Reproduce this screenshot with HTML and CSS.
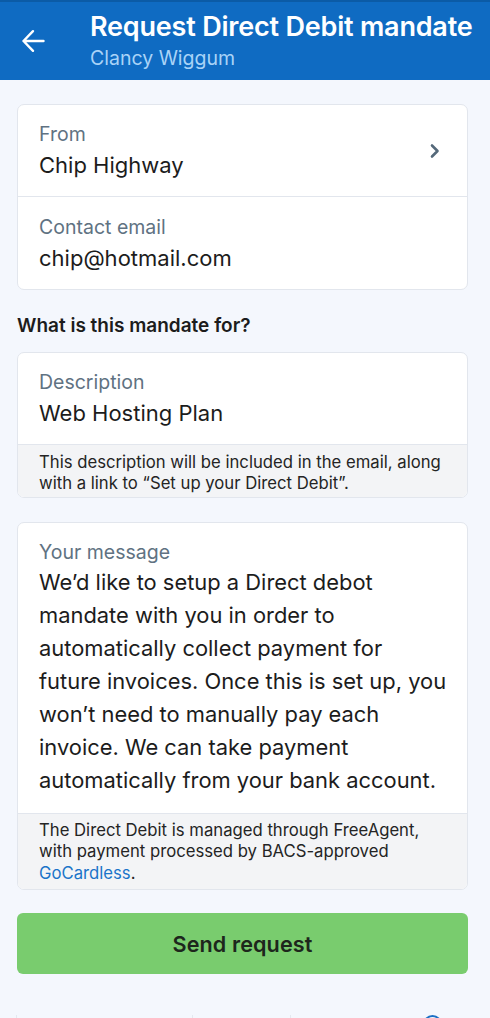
FILE: index.html
```html
<!DOCTYPE html>
<html lang="en">
<head>
<meta charset="utf-8">
<title>Request Direct Debit mandate</title>
<link rel="stylesheet" href="styles.css">
</head>
<body>
<header class="appbar">
  <button class="back" aria-label="Back">
    <svg width="24" height="24" viewBox="0 0 24 24"><path d="M22.5 12H2.5M12 2.2L2.5 12l9.5 9.8" fill="none" stroke="#fff" stroke-width="2.4" stroke-linecap="round" stroke-linejoin="round"/></svg>
  </button>
  <div class="titles">
    <h1 class="title">Request Direct Debit mandate</h1>
    <div class="subtitle">Clancy Wiggum</div>
  </div>
</header>
<main class="content">
  <section class="card">
    <div class="field field-first field-link">
      <div class="field-body">
        <div class="label">From</div>
        <div class="value">Chip Highway</div>
      </div>
      <svg class="chevron" width="12" height="16" viewBox="0 0 12 16"><path d="M3 2.5l5.5 5.5-5.5 5.5" fill="none" stroke="#55697a" stroke-width="2.6" stroke-linecap="round" stroke-linejoin="round"/></svg>
    </div>
    <div class="field field-sep">
      <div class="label">Contact email</div>
      <div class="value">chip@hotmail.com</div>
    </div>
  </section>

  <h2 class="section-title">What is this mandate for?</h2>

  <section class="card">
    <div class="field field-first">
      <div class="label">Description</div>
      <div class="value">Web Hosting Plan</div>
    </div>
    <div class="note note-desc">This description will be included in the email, along with a link to “Set up your Direct Debit”.</div>
  </section>

  <section class="card card-msg">
    <div class="field field-first field-msg">
      <div class="label">Your message</div>
      <div class="message">We’d like to setup a Direct debot<br>mandate with you in order to<br>automatically collect payment for<br>future invoices. Once this is set up, you<br>won’t need to manually pay each<br>invoice. We can take payment<br>automatically from your bank account.</div>
    </div>
    <div class="note note-msg">The Direct Debit is managed through FreeAgent, with payment processed by BACS-approved <a class="link" href="#">GoCardless</a>.</div>
  </section>

  <button class="primary">Send request</button>
</main>
<nav class="tabbar">
  <span class="tab"></span>
  <span class="tab"></span>
  <span class="tab"></span>
  <span class="tab tab-icon"><span class="ring"></span></span>
</nav>
</body>
</html>
```

FILE: styles.css
```css
* { box-sizing: border-box; }
html, body { margin: 0; padding: 0; }
body {
  background: #f4f7fd;
  font-family: Inter, "Noto Sans", sans-serif;
  color: #1f1f1f;
  width: 490px;
  height: 1018px;
  overflow: hidden;
}
.appbar {
  background: #0f6bc2;
  border-top: 2px solid #0b5ba6;
  height: 80px;
  display: flex;
  align-items: flex-start;
  padding: 9px 0 0 21px;
}
.back {
  background: none;
  border: 0;
  padding: 0;
  width: 24px;
  height: 24px;
  margin: 18px 45px 0 0;
}
.back svg { display: block; }
.titles { display: flex; flex-direction: column; }
.title {
  margin: 0;
  color: #fff;
  font-size: 27px;
  font-weight: 600;
  line-height: 32px;
  letter-spacing: -0.2px;
}
.subtitle {
  color: #a9d3f7;
  font-size: 19.5px;
  line-height: 24px;
  margin-top: 3px;
}
.content {
  padding: 24px 22px 0 17px;
  display: flex;
  flex-direction: column;
}
.card {
  background: #fff;
  border: 1px solid #e2e6ed;
  border-radius: 7px;
  overflow: hidden;
}
.field { padding: 18px 16px 16px 21px; }
.field-first { padding-top: 17px; padding-bottom: 16px; }
.field-link {
  display: flex;
  align-items: center;
  justify-content: space-between;
  padding-right: 26px;
}
.field-sep { border-top: 1px solid #e2e6ed; }
.label {
  color: #607282;
  font-size: 19.5px;
  line-height: 24px;
}
.value {
  color: #1c1c1c;
  font-size: 22px;
  line-height: 30px;
  margin-top: 4px;
}
.chevron { display: block; margin-top: 0; }
.section-title {
  margin: 24px 0 14px;
  font-size: 19px;
  line-height: 24px;
  font-weight: 600;
  color: #1c1c1c;
}
.note {
  background: #f3f4f6;
  border-top: 1px solid #e2e6ed;
  font-size: 16.7px;
  line-height: 21.5px;
  color: #242424;
  padding: 6px 16px 3px 21px;
}
.note-desc { padding-top: 6.5px; padding-bottom: 2.5px; }
.note-msg { padding-top: 5.5px; padding-bottom: 4.5px; }
.card-msg { margin-top: 24px; }
.field-msg { padding-right: 6px; padding-bottom: 16px; }
.message {
  font-size: 21.9px;
  line-height: 33px;
  color: #1c1c1c;
  margin-top: 2px;
}
.link { color: #1b74c9; text-decoration: none; }
.primary {
  margin-top: 23px;
  height: 61px;
  border: 0;
  border-radius: 6px;
  background: #79cc6e;
  color: #1d261c;
  font-family: inherit;
  font-size: 21.6px;
  font-weight: 600;
  letter-spacing: 0.1px;
  padding: 2px 0 0;
}
.tabbar {
  margin-top: 39px;
  display: grid;
  grid-template-columns: 176px 98px 98px 1fr;
  height: 5px;
  overflow: hidden;
  padding: 2px 0 0 16px;
}
.tab { border-left: 1px solid #e4e8ef; }
.tab-icon { border-left: 0; display: flex; justify-content: flex-end; padding-right: 48px; }
.ring {
  flex: none;
  width: 19px;
  height: 19px;
  border: 2px solid #1b6fc4;
  border-radius: 50%;
}
```
